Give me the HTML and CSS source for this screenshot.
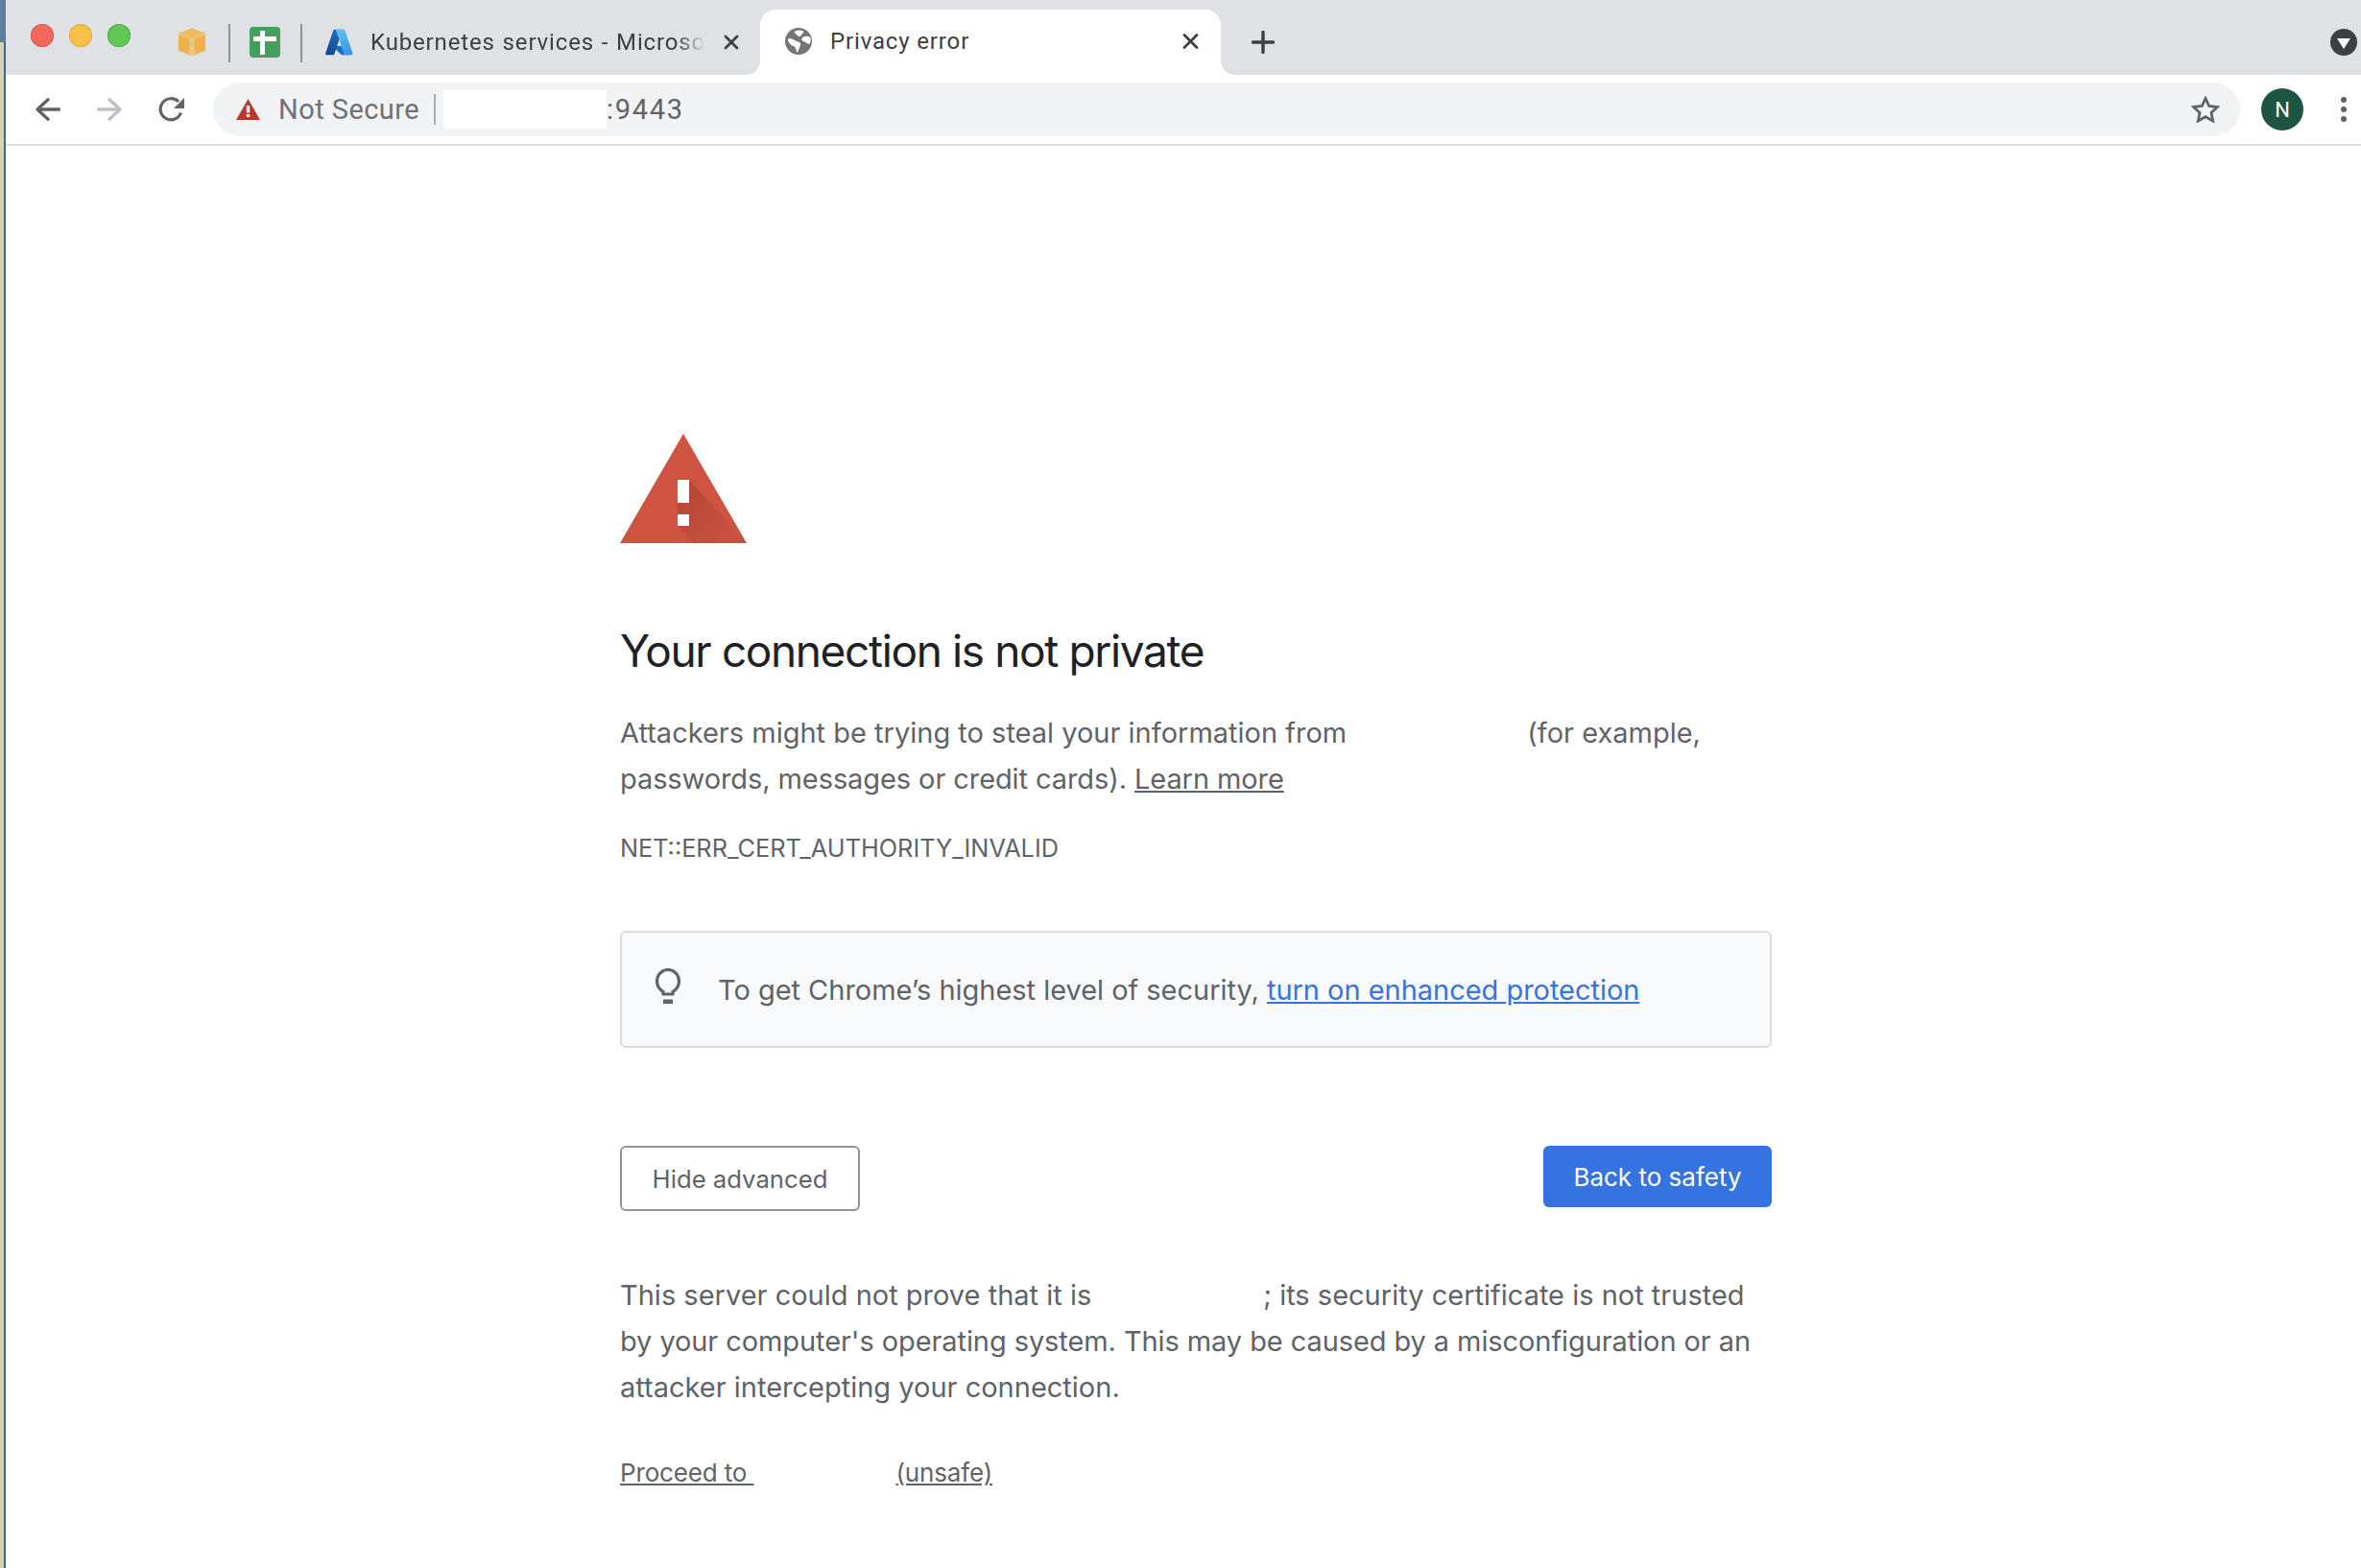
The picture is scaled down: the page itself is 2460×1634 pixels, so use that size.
FILE: index.html
```html
<!DOCTYPE html>
<html lang="en">
<head>
<meta charset="utf-8">
<title>Privacy error</title>
<link rel="stylesheet" href="styles.css">
</head>
<body>
<div class="edge"><div class="edge-top"></div><div class="edge-rest"></div></div>
<div class="window">
  <div class="tabstrip">
    <div class="lights"><span class="light red"></span><span class="light yellow"></span><span class="light green"></span></div>
    <svg class="fav-box" width="28" height="28" viewBox="0 0 28 28"><path d="M14 0l14 4.500v18.500l-14 5-14-5V4.500z" fill="#ecb24b"/><path d="M14 0l14 4.500-14 5.500-14-5.500z" fill="#efbb5e"/><path d="M11.500 10h5v18h-5z" fill="#e9c98e"/><path d="M0 4.500l14 5.500 14-5.500v1.500l-14 5.500-14-5.500z" fill="#f3cd87"/></svg>
    <span class="tab-sep sep-one"></span>
    <svg class="fav-sheet" width="32" height="32" viewBox="0 0 32 32"><rect width="32" height="32" rx="4" fill="#459e5e"/><path d="M11 4h5v6h12v5H16v14h-5V15H4v-5h7z" fill="#fff"/></svg>
    <span class="tab-sep sep-two"></span>
    <svg class="fav-azure" width="29" height="28" viewBox="3.500 6 90 84"><defs><linearGradient id="azL" x1="0.600" y1="0" x2="0.200" y2="1"><stop offset="0" stop-color="#1a6ac4"/><stop offset="1" stop-color="#114a8b"/></linearGradient><linearGradient id="azR" x1="0.300" y1="0" x2="0.700" y2="1"><stop offset="0" stop-color="#5cc0f2"/><stop offset="1" stop-color="#3a97e2"/></linearGradient></defs><path d="M71.175 60.261h-41.29a1.911 1.911 0 0 0-1.305 3.309l26.532 24.764a4.171 4.171 0 0 0 2.846 1.121h23.38z" fill="#1f6cc8"/><path d="M33.338 6.544h26.038l-27.030 80.087a4.152 4.152 0 0 1-3.933 2.824H8.149a4.145 4.145 0 0 1-3.928-5.470L29.404 9.368a4.152 4.152 0 0 1 3.934-2.825z" fill="url(#azL)"/><path d="M66.595 9.364a4.145 4.145 0 0 0-3.928-2.820H33.648a4.146 4.146 0 0 1 3.928 2.820l25.184 74.620a4.146 4.146 0 0 1-3.928 5.472h29.020a4.146 4.146 0 0 0 3.927-5.472z" fill="url(#azR)"/></svg>
    <span class="tab-title inactive-title">Kubernetes services - Microsof</span>
    <svg class="tab-close close-one" width="16" height="16" viewBox="0 0 16 16"><path d="M2 2l12 12M14 2L2 14" stroke="#3c4043" stroke-width="2.800" stroke-linecap="round"/></svg>
    <div class="active-tab">
      <svg class="fav-globe" width="28" height="28" viewBox="0 0 28 28"><circle cx="14" cy="14" r="14" fill="#757575"/><path d="M10 4c2-1.500 6-2 9-.5 1 1-.5 2-1.500 3s-1 2.500-2.500 2.500-2-1-3-2-3-1.500-2-3z" fill="#fff"/><path d="M19 9.500c2-1 5-1 7.500.5.500 2.500 0 5-1 7-1.500 0-2.500-1-3.500-1.500-1.500-1-3.500-1.500-4.500-2.500s.5-2.500 1.500-3.500z" fill="#fff"/><path d="M3 11.500c2.500-.5 5 0 7 1.500s4.500 1 5.500 2.500.5 3.500-.5 5-1 5-2.500 5c-1-1.500-1-3.500-2-5s-3-1.500-4.500-3-3.500-3.500-3-6z" fill="#fff"/></svg>
      <span class="tab-title active-title">Privacy error</span>
      <svg class="tab-close close-two" width="17" height="16" viewBox="0 0 16 16"><path d="M1.500 1.500l13 13M14.500 1.500l-13 13" stroke="#3c4043" stroke-width="2.800" stroke-linecap="round"/></svg>
    </div>
    <svg class="new-tab" width="24" height="24" viewBox="0 0 24 24"><path d="M12 1.500v21M1.500 12h21" stroke="#3c4043" stroke-width="3.400" stroke-linecap="round"/></svg>
    <span class="tab-menu"><svg width="14" height="11" viewBox="0 0 14 11"><path d="M0 0h14L7 11z" fill="#fff"/></svg></span>
  </div>
  <div class="toolbar">
    <svg class="nav nav-back" width="26" height="24" viewBox="0 0 26 24"><path d="M24.500 12H2M13 1.800L2 12l11 10.200" fill="none" stroke="#5f6368" stroke-width="3.300" stroke-linecap="round" stroke-linejoin="round"/></svg>
    <svg class="nav nav-forward" width="26" height="24" viewBox="0 0 26 24"><path d="M1.500 12H24M13 1.800L24 12 13 22.200" fill="none" stroke="#bdc1c6" stroke-width="3.300" stroke-linecap="round" stroke-linejoin="round"/></svg>
    <svg class="nav nav-reload" width="27" height="26" viewBox="0 0 27 26"><path d="M23.500 16.500a11 11 0 1 1-2.500-11.500" fill="none" stroke="#5f6368" stroke-width="3.200"/><path d="M27 1v11H16z" fill="#5f6368"/></svg>
    <div class="omnibox">
      <svg class="warn" width="25" height="22" viewBox="0 0 25 22"><path d="M12.500 0L25 22H0z" fill="#b8392c"/><path d="M10.800 7h3.400v7.500h-3.400zM10.800 16h3.400v3h-3.400z" fill="#fff"/></svg>
      <span class="not-secure">Not Secure</span>
      <span class="omni-sep"></span>
      <span class="redact-host"></span>
      <span class="port">:9443</span>
      <svg class="star" width="30" height="28" viewBox="0 0 30 28"><path d="M15 2.500l3.700 8 8.800 1-6.500 6 1.700 8.500-7.700-4.300-7.700 4.300 1.700-8.500-6.500-6 8.800-1z" fill="none" stroke="#5f6368" stroke-width="2.800" stroke-linejoin="miter"/></svg>
    </div>
    <span class="avatar">N</span>
    <span class="kebab"><i></i><i></i><i></i></span>
  </div>
  <main class="page">
    <svg class="alert-icon" width="132" height="114" viewBox="0 0 132 114"><defs><linearGradient id="shade" gradientUnits="userSpaceOnUse" x1="60" y1="72" x2="100" y2="112"><stop offset="0" stop-color="#000" stop-opacity=".13"/><stop offset="1" stop-color="#000" stop-opacity=".04"/></linearGradient></defs><path d="M66 0l66 114H0z" fill="#cf5341"/><path d="M72 48l60 66H78L60 96V72z" fill="url(#shade)"/><path d="M60 48h12v24H60zM60 84h12v12H60z" fill="#fff"/></svg>
    <h1 class="headline">Your connection is not private</h1>
    <div class="copy copy-intro">
      <div class="line"><span>Attackers might be trying to steal your information from</span><span class="gap gap-from"></span><span>(for example,</span></div>
      <div class="line line-tight"><span>passwords, messages or credit cards). </span><a class="link-plain" href="#">Learn more</a></div>
    </div>
    <p class="error-code">NET::ERR_CERT_AUTHORITY_INVALID</p>
    <div class="promo">
      <svg class="bulb" width="26" height="38" viewBox="0 0 26 38"><path d="M8 27v-2.500C4 22 1.500 18.500 1.500 13.500 1.500 7 6.500 1.500 13 1.500s11.500 5.500 11.500 12c0 5-2.500 8.500-6.500 11V27z" fill="none" stroke="#5f6368" stroke-width="3.200"/><path d="M8 32.500h10V37H8z" fill="#5f6368"/></svg>
      <span class="promo-text"><span>To get Chrome’s highest level of security, </span><a class="link-blue" href="#">turn on enhanced protection</a></span>
    </div>
    <div class="actions">
      <button class="btn btn-ghost">Hide advanced</button>
      <button class="btn btn-primary">Back to safety</button>
    </div>
    <div class="copy copy-detail">
      <div class="line"><span>This server could not prove that it is</span><span class="gap gap-host"></span><span>; its security certificate is not trusted</span></div>
      <div class="line line-tight">by your computer's operating system. This may be caused by a misconfiguration or an</div>
      <div class="line">attacker intercepting your connection.</div>
    </div>
    <p class="proceed"><a class="link-plain" href="#">Proceed to&nbsp;</a><span class="gap gap-proceed"></span><a class="link-plain" href="#">(unsafe)</a></p>
  </main>
</div>
</body>
</html>
```
FILE: styles.css
```css
* { box-sizing: border-box; }
html, body { margin: 0; height: 100%; }
body { display: flex; width: 2460px; height: 1634px; overflow: hidden; background: #fff; font-family: "Inter", "Liberation Sans", sans-serif; }

.edge { width: 6px; flex: none; display: flex; flex-direction: column; }
.edge-top { height: 44px; background: #5b7f9c; }
.edge-rest { flex: 1; background: linear-gradient(90deg, #d6d0b4 0 4px, #3f668c 4px 6px); }

.window { flex: 1; min-width: 0; display: flex; flex-direction: column; }

.tabstrip { height: 78px; flex: none; display: flex; align-items: center; background: #dfe1e5; font-family: "Roboto", "Liberation Sans", sans-serif; }
.lights { display: flex; gap: 16px; margin-left: 26px; margin-top: -4px; }
.light { width: 24px; height: 24px; border-radius: 50%; }
.red { background: #f2675e; box-shadow: inset 0 0 0 1px #dd5a50; }
.yellow { background: #fbbf4c; box-shadow: inset 0 0 0 1px #e3a73c; }
.green { background: #61c855; box-shadow: inset 0 0 0 1px #51ad47; }
.fav-box { margin-left: 50px; margin-top: 10px; flex: none; }
.tab-sep { width: 2px; height: 40px; background: #8f9296; flex: none; margin-top: 12px; }
.sep-one { margin-left: 24px; }
.sep-two { margin-left: 21px; }
.fav-sheet { margin-left: 20px; margin-top: 10px; flex: none; }
.fav-azure { margin-left: 24px; margin-top: 10px; flex: none; }
.tab-title { font-size: 24px; letter-spacing: .85px; color: #3c4043; white-space: nowrap; }
.inactive-title { margin-left: 18px; width: 349px; margin-top: 9px; word-spacing: 1px; -webkit-mask-image: linear-gradient(90deg, #000 91%, transparent 100%); mask-image: linear-gradient(90deg, #000 91%, transparent 100%); }
.close-one { margin-left: 19px; margin-top: 10px; flex: none; }
.active-tab { position: relative; width: 480px; height: 68px; margin-left: 22px; margin-top: 10px; padding-left: 26px; display: flex; align-items: center; background: #fff; border-radius: 16px 16px 0 0; flex: none; }
.active-tab::before, .active-tab::after { content: ""; position: absolute; bottom: 0; width: 14px; height: 14px; background: radial-gradient(circle at 0 0, transparent 13.500px, #fff 14px); }
.active-tab::before { left: -14px; }
.active-tab::after { right: -14px; transform: scaleX(-1); }
.fav-globe { flex: none; margin-top: -2px; }
.active-title { margin-left: 19px; margin-top: -2px; }
.close-two { margin-left: auto; margin-right: 23px; margin-top: -2px; }
.new-tab { margin-left: 32px; margin-top: 10px; flex: none; }
.tab-menu { margin-left: auto; margin-right: 4px; margin-top: 10px; width: 28px; height: 28px; border-radius: 50%; background: #3c4043; display: flex; align-items: center; justify-content: center; padding-top: 2px; }

.toolbar { height: 74px; flex: none; display: flex; align-items: center; border-bottom: 2px solid #dadce0; }
.nav { flex: none; }
.nav-back { margin-left: 31px; }
.nav-forward { margin-left: 38px; }
.nav-reload { margin-left: 38px; }
.omnibox { height: 56px; width: 2112px; margin-left: 30px; border-radius: 28px; background: #f1f3f4; display: flex; align-items: center; padding-left: 24px; font-family: "Roboto", "Liberation Sans", sans-serif; font-size: 29px; letter-spacing: .45px; color: #6f7276; flex: none; }
.warn { flex: none; }
.not-secure { margin-left: 19px; }
.omni-sep { width: 2px; height: 32px; background: #a9abad; margin-left: 15px; flex: none; }
.redact-host { width: 170px; height: 40px; background: #fff; margin-left: 8px; flex: none; }
.port { color: #5f6368; letter-spacing: 1.700px; }
.star { margin-left: auto; margin-right: 21px; flex: none; }
.avatar { width: 44px; height: 44px; border-radius: 50%; background: #1e5442; color: #fff; margin-left: 22px; display: flex; align-items: center; justify-content: center; font-family: "Roboto", "Liberation Sans", sans-serif; font-size: 22px; flex: none; }
.kebab { margin-left: 39px; display: flex; flex-direction: column; gap: 4px; flex: none; }
.kebab i { width: 6px; height: 6px; border-radius: 50%; background: #5f6368; display: block; }

.page { flex: 1; padding: 300px 0 0 640px; }
.alert-icon { display: block; }
.headline { margin: 84px 0 0; font-size: 46px; line-height: 56px; font-weight: 400; color: #202124; letter-spacing: -1.370px; }
.copy { font-size: 29px; line-height: 48px; color: #5f6368; width: 1200px; }
.line { white-space: nowrap; }
.line-tight { letter-spacing: -.09px; }
.copy-intro { margin-top: 34px; }
.gap { display: inline-block; height: 1px; }
.gap-from { width: 188px; }
.gap-host { width: 179px; }
.gap-proceed { width: 148px; }
.link-plain { color: #5f6368; text-decoration: underline; }
.error-code { margin: 32px 0 0; font-size: 25.300px; line-height: 32px; color: #5f6368; }
.promo { width: 1200px; height: 122px; margin-top: 70px; display: flex; align-items: center; padding-left: 35px; background: #f8f9fa; border: 2px solid #dadce0; border-radius: 6px; }
.bulb { flex: none; margin-top: -6px; }
.promo-text { margin-left: 39px; font-size: 29px; letter-spacing: -.03px; color: #5f6368; }
.link-blue { color: #3574e0; text-decoration: underline; }
.actions { width: 1200px; display: flex; justify-content: space-between; align-items: flex-start; margin-top: 102px; }
.btn { font-family: inherit; font-size: 26px; border-radius: 6px; padding: 0; }
.btn-ghost { width: 250px; height: 68px; background: #fff; color: #5f6368; border: 2px solid #8f9499; font-size: 25.700px; }
.btn-primary { width: 238px; height: 64px; background: #3574e0; color: #fff; border: 0; }
.copy-detail { margin-top: 64px; }
.proceed { margin: 49px 0 0; font-size: 26px; letter-spacing: -.15px; line-height: 32px; color: #5f6368; }
```
